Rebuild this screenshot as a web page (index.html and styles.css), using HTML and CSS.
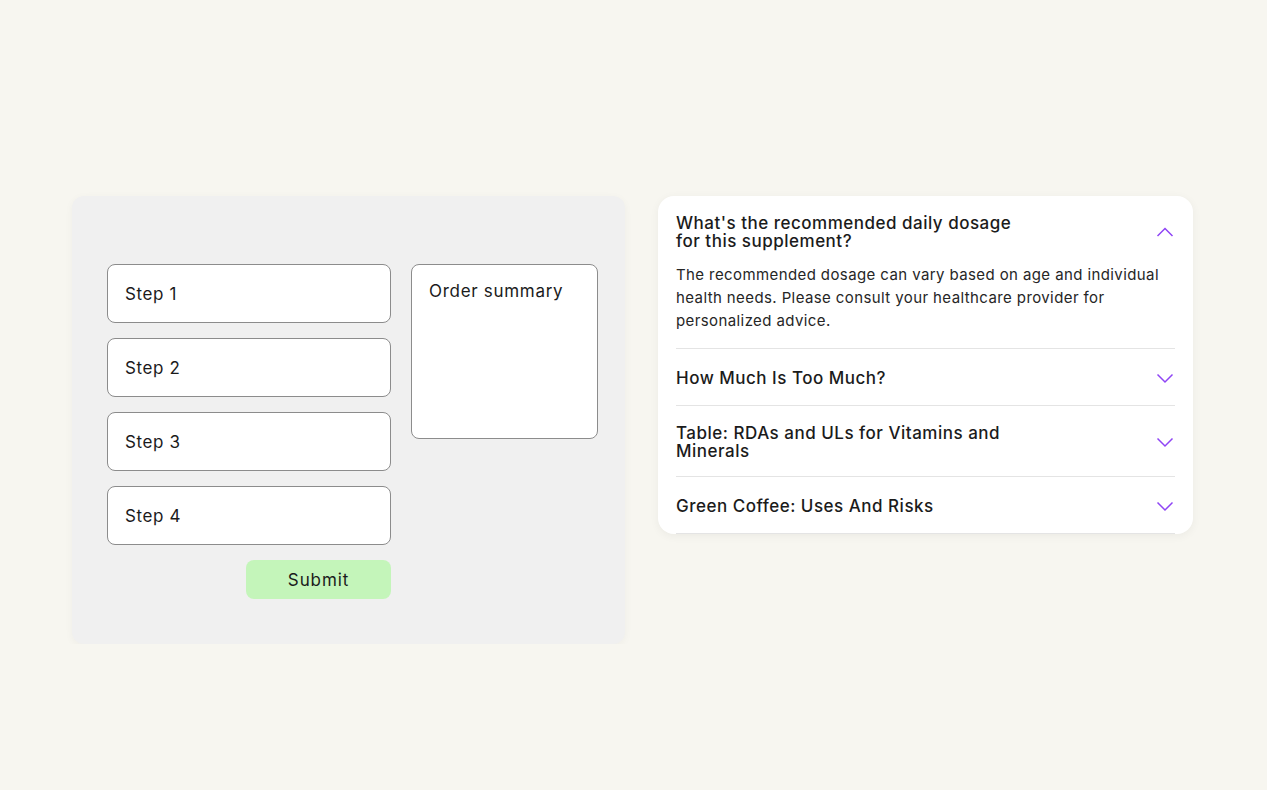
FILE: index.html
```html
<!DOCTYPE html>
<html lang="en">
<head>
    <meta charset="UTF-8">
    <meta name="viewport" content="width=device-width, initial-scale=1.0">
    <title>Checkout</title>
    <link rel="stylesheet" href="styles.css">
</head>
<body>

<main class="page">
    <section class="checkout">
        <div class="checkout-body">
            <div class="steps">
                <div class="step">Step 1</div>
                <div class="step">Step 2</div>
                <div class="step">Step 3</div>
                <div class="step">Step 4</div>
                <button class="submit">Submit</button>
            </div>
            <aside class="summary">Order summary</aside>
        </div>
    </section>

    <section class="faq">
        <div class="faq-item open">
            <div class="faq-head">
                <h3>What's the recommended daily dosage for this supplement?</h3>
                <svg class="chevron" width="20" height="22" viewBox="0 0 20 22"><path d="M2.5 15 L10 7.5 L17.5 15" /></svg>
            </div>
            <p class="faq-answer">The recommended dosage can vary based on age and individual health needs. Please consult your healthcare provider for personalized advice.</p>
        </div>
        <div class="faq-item">
            <div class="faq-head">
                <h3>How Much Is Too Much?</h3>
                <svg class="chevron" width="20" height="22" viewBox="0 0 20 22"><path d="M2.5 7.5 L10 15 L17.5 7.5" /></svg>
            </div>
        </div>
        <div class="faq-item">
            <div class="faq-head">
                <h3>Table: RDAs and ULs for Vitamins and Minerals</h3>
                <svg class="chevron" width="20" height="22" viewBox="0 0 20 22"><path d="M2.5 7.5 L10 15 L17.5 7.5" /></svg>
            </div>
        </div>
        <div class="faq-item">
            <div class="faq-head">
                <h3>Green Coffee: Uses And Risks</h3>
                <svg class="chevron" width="20" height="22" viewBox="0 0 20 22"><path d="M2.5 7.5 L10 15 L17.5 7.5" /></svg>
            </div>
        </div>
    </section>
</main>

</body>
</html>
```

FILE: styles.css
```css
/* Base */
body {
    margin: 0;
    background-color: #f7f6f0;
    font-family: 'Inter', 'Noto Sans', sans-serif;
    color: #1b1b1b;
}
.page {
    display: flex;
    align-items: flex-start;
    gap: 33px;
    padding: 196px 0 0 72px;
}

/* Checkout card */
.checkout {
    width: 553px;
    height: 448px;
    box-sizing: border-box;
    padding: 68px 27px 0 35px;
    background-color: #f0f0f0;
    border-radius: 12px;
    box-shadow: 0 2px 8px rgba(0, 0, 0, 0.04);
}
.checkout-body {
    display: flex;
    align-items: flex-start;
    gap: 20px;
}
.steps {
    display: flex;
    flex-direction: column;
    align-items: flex-end;
    gap: 15px;
    width: 284px;
}
.step {
    width: 100%;
    height: 59px;
    box-sizing: border-box;
    padding: 0 17px;
    display: flex;
    align-items: center;
    background: #ffffff;
    border: 1px solid #8c8c8c;
    border-radius: 8px;
    font-size: 17px;
    letter-spacing: 0.6px;
}
.submit {
    width: 145px;
    height: 39px;
    border: none;
    border-radius: 8px;
    background-color: #c4f5ba;
    color: #1b1b1b;
    font-family: inherit;
    font-size: 17px;
    letter-spacing: 0.9px;
    cursor: pointer;
}
.summary {
    width: 187px;
    height: 175px;
    box-sizing: border-box;
    padding: 16px 17px;
    background: #ffffff;
    border: 1px solid #8c8c8c;
    border-radius: 8px;
    font-size: 17px;
    letter-spacing: 0.7px;
}

/* FAQ card */
.faq {
    width: 535px;
    box-sizing: border-box;
    padding: 0 18px;
    background: #ffffff;
    border-radius: 16px;
    box-shadow: 0 2px 10px rgba(0, 0, 0, 0.05);
    overflow: hidden;
}
.faq-item {
    border-bottom: 1px solid #e4e4e4;
}
.faq-head {
    display: flex;
    align-items: center;
    justify-content: space-between;
    padding: 18px 0 16px;
}
.faq-head h3 {
    margin: 0;
    max-width: 345px;
    font-size: 17px;
    font-weight: 500;
    line-height: 18px;
    letter-spacing: 0.5px;
}
.chevron {
    flex-shrink: 0;
}
.chevron path {
    fill: none;
    stroke: #8f45f5;
    stroke-width: 1.5;
}
.faq-item.open .faq-head {
    padding-bottom: 13px;
}
.faq-answer {
    margin: 0;
    padding-bottom: 16px;
    font-size: 15px;
    line-height: 23px;
    letter-spacing: 0.4px;
    color: #262626;
}
```
